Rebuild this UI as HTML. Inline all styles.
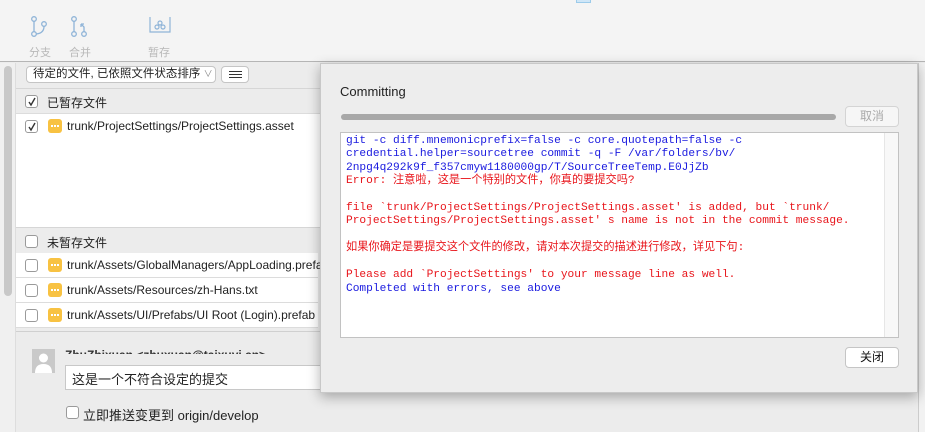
<!DOCTYPE html>
<html><head><meta charset="utf-8"><style>
*{margin:0;padding:0;box-sizing:border-box}
body{width:925px;height:432px;overflow:hidden;background:#ececec;font-family:"Liberation Sans","Noto Sans CJK SC",sans-serif;font-size:12px;color:#222;position:relative}
.abs{position:absolute}
.tb{left:0;top:0;width:925px;height:62px;background:#f4f4f4;border-bottom:1px solid #b5b5b5}
.tl{color:#b8b8b8;font-size:11px}
.cb{width:13px;height:13px;border:1px solid #9a9a9a;border-radius:3px;background:#fff}
.cb svg{position:absolute;left:1px;top:1px}
.ic{width:14px;height:14px;background:#f8c242;border-radius:3px}
.ic::after{content:"";position:absolute;left:3px;top:6px;width:2px;height:2px;background:#fff;box-shadow:3px 0 #fff,6px 0 #fff}
.row{left:16px;width:302px;height:25px;background:#fff;border-bottom:1px solid #dcdcdc}
.row .cb{position:absolute;left:9px;top:6px}
.row .ic{position:absolute;left:32px;top:5px}
.row span{position:absolute;left:51px;top:5px;font-size:12px;white-space:nowrap}
.mono{font-family:"Liberation Mono","Noto Sans CJK SC",monospace;font-size:11.2px;line-height:13.4px;white-space:pre}
.btn{background:#fff;border:1px solid #c5c5c5;border-radius:4px;text-align:center;font-size:12px}
</style></head><body>
<div class="abs tb"></div>
<div class="abs" style="left:576px;top:-4px;width:15px;height:7px;background:#cfe6f7;border:1px solid #9ccbea"></div>
<svg class="abs" style="left:30px;top:15px" width="20" height="24" fill="none" stroke="#8fb4d8" stroke-width="1.3"><circle cx="4" cy="4" r="2.3"/><circle cx="4" cy="19" r="2.3"/><circle cx="14" cy="9" r="2.3"/><path d="M4 6.5V16.5M14 11.5Q14 18 6.5 19"/></svg>
<svg class="abs" style="left:70px;top:15px" width="20" height="24" fill="none" stroke="#8fb4d8" stroke-width="1.3"><circle cx="4" cy="4" r="2.3"/><circle cx="4" cy="19" r="2.3"/><circle cx="14" cy="19" r="2.3"/><path d="M4 6.5V16.5M14 16.5V12L11 9M11 9h3M11 9v3"/></svg>
<svg class="abs" style="left:149px;top:16px" width="22" height="18" fill="none" stroke="#8fb4d8" stroke-width="1.2"><path d="M1 1V16H21V1"/><circle cx="8" cy="11" r="2"/><circle cx="14" cy="11" r="2"/><circle cx="11" cy="7" r="2"/></svg>
<div class="abs tl" style="left:29px;top:44px">分支</div>
<div class="abs tl" style="left:69px;top:44px">合并</div>
<div class="abs tl" style="left:148px;top:44px">暂存</div>
<div class="abs" style="left:0;top:63px;width:16px;height:369px;background:#f0f0f0;border-right:1px solid #ddd"></div>
<div class="abs" style="left:4px;top:66px;width:8px;height:230px;background:#c8c8c8;border-radius:4px"></div>
<div class="abs" style="left:16px;top:63px;width:304px;height:26px;background:#ececec;border-bottom:1px solid #d6d6d6"></div>
<div class="abs btn" style="left:26px;top:66px;width:190px;height:17px;font-size:11.5px;line-height:15px;text-align:left;padding-left:6px">待定的文件, 已依照文件状态排序 <span style="color:#888;font-size:9px">∨</span></div>
<div class="abs btn" style="left:221px;top:66px;width:28px;height:17px"><div style="position:absolute;left:7px;top:4px;width:13px;height:1px;background:#333;box-shadow:0 3px #333,0 6px #333"></div></div>
<div class="abs" style="left:16px;top:89px;width:304px;height:25px;background:#ececec;border-bottom:1px solid #dcdcdc"></div>
<div class="abs cb" style="left:25px;top:95px"><svg width="10" height="10"><path d="M2 5L4 8L8 1" fill="none" stroke="#333" stroke-width="1.4"/></svg></div>
<div class="abs" style="left:47px;top:94px">已暂存文件</div>
<div class="abs" style="left:16px;top:114px;width:304px;height:114px;background:#fff;border-bottom:1px solid #d6d6d6"></div>
<div class="abs row" style="top:114px;border:none"><div class="cb"><svg width="10" height="10"><path d="M2 5L4 8L8 1" fill="none" stroke="#333" stroke-width="1.4"/></svg></div><div class="ic"></div><span>trunk/ProjectSettings/ProjectSettings.asset</span></div>
<div class="abs" style="left:16px;top:229px;width:304px;height:25px;background:#ececec"></div>
<div class="abs cb" style="left:25px;top:235px"></div>
<div class="abs" style="left:47px;top:234px">未暂存文件</div>
<div class="abs row" style="top:253px"><div class="cb"></div><div class="ic"></div><span>trunk/Assets/GlobalManagers/AppLoading.prefab</span></div>
<div class="abs row" style="top:278px"><div class="cb"></div><div class="ic"></div><span>trunk/Assets/Resources/zh-Hans.txt</span></div>
<div class="abs row" style="top:303px"><div class="cb"></div><div class="ic"></div><span>trunk/Assets/UI/Prefabs/UI Root (Login).prefab</span></div>
<div class="abs" style="left:16px;top:331px;width:304px;height:1px;background:#d0d0d0"></div>
<div class="abs" style="left:32px;top:349px;width:23px;height:24px;background:#c9c9c9"><svg width="23" height="24"><circle cx="11.5" cy="9" r="4.5" fill="#fff"/><path d="M3 24Q3 15 11.5 15Q20 15 20 24Z" fill="#fff"/></svg></div>
<div class="abs" style="left:65px;top:348px;height:6px;overflow:hidden;font-weight:bold;font-size:12px;color:#333">ZhuZhixuan &lt;zhuxuan@taixuyi.cn&gt;</div>
<div class="abs" style="left:65px;top:365px;width:260px;height:25px;background:#fff;border:1px solid #c8c8c8;padding:3px 6px;font-size:13px">这是一个不符合设定的提交</div>
<div class="abs cb" style="left:66px;top:406px"></div>
<div class="abs" style="left:83px;top:405px;font-size:13px">立即推送变更到 origin/develop</div>
<div class="abs" style="left:918px;top:63px;width:7px;height:369px;background:#f2f2f2;border-left:1px solid #ccc"></div>
<div class="abs" style="left:320px;top:63px;width:598px;height:330px;background:#ededed;box-shadow:0 4px 12px rgba(0,0,0,.3);border:1px solid #c8c8c8"></div>
<div class="abs" style="left:340px;top:84px;font-size:13px;color:#222">Committing</div>
<div class="abs" style="left:341px;top:114px;width:495px;height:6px;background:#a8a8a8;border-radius:3px"></div>
<div class="abs btn" style="left:845px;top:106px;width:54px;height:21px;line-height:19px;color:#aaa;background:#f6f6f6;border-color:#d4d4d4">取消</div>
<div class="abs" style="left:340px;top:132px;width:559px;height:206px;background:#fff;border:1px solid #c2c2c2"></div>
<div class="abs" style="left:884px;top:133px;width:14px;height:204px;background:#f8f8f8;border-left:1px solid #e6e6e6"></div>
<div class="abs mono" style="left:346px;top:135px;color:#1a1adf">git -c diff.mnemonicprefix=false -c core.quotepath=false -c
credential.helper=sourcetree commit -q -F /var/folders/bv/
2npg4q292k9f_f357cmyw1180000gp/T/SourceTreeTemp.E0JjZb</div>
<div class="abs mono" style="left:346px;top:175px;color:#e8141a;line-height:13.4px">Error: 注意啦，这是一个特别的文件，你真的要提交吗?

file `trunk/ProjectSettings/ProjectSettings.asset' is added, but `trunk/
ProjectSettings/ProjectSettings.asset' s name is not in the commit message.

如果你确定是要提交这个文件的修改，请对本次提交的描述进行修改，详见下句:

Please add `ProjectSettings' to your message line as well.</div>
<div class="abs mono" style="left:346px;top:283px;color:#1a1adf">Completed with errors, see above</div>
<div class="abs btn" style="left:845px;top:347px;width:54px;height:21px;line-height:19px;color:#111">关闭</div>
</body></html>
